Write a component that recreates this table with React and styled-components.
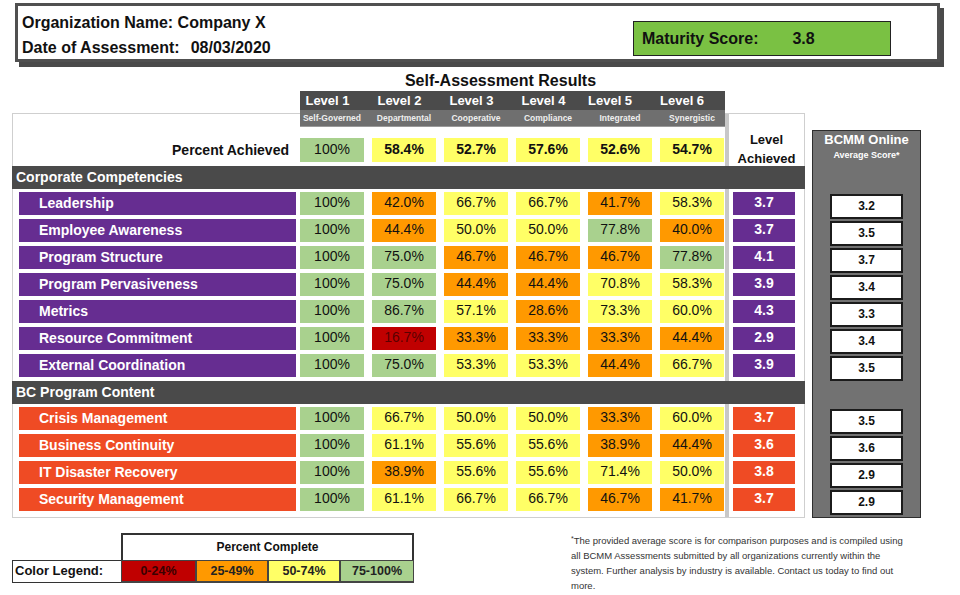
import styled, { createGlobalStyle } from "styled-components"

const GlobalStyle = createGlobalStyle`
    body {
        margin: 0;
        background: #fff;
        font-family: "Liberation Sans", Arial, sans-serif;
        color: #111;
    }
`

const COLORS = {
    red: '#c00000',
    orange: '#ff9900',
    yellow: '#ffff66',
    green: '#a9d18e',
    purple: '#662d91',
    flame: '#ef4b24',
}

const bandColor = v => v < 25 ? COLORS.red : v < 50 ? COLORS.orange : v < 75 ? COLORS.yellow : COLORS.green

const Page = styled.div`
    width: 960px;
    height: 595px;
    overflow: hidden;
`

const HeaderBox = styled.div`
    margin: 3px 0 0 15px;
    width: 925px;
    height: 59px;
    box-sizing: border-box;
    border: 3px solid #505050;
    box-shadow: 4px 5px 0 #4a4a4a;
    display: flex;
    justify-content: space-between;
    align-items: flex-start;
`

const Info = styled.div`
    padding: 4px 0 0 4px;
    font-size: 16px;
    font-weight: 700;
    line-height: 25px;
`

const DateValue = styled.span`
    margin-left: 11px;
`

const MaturityBox = styled.div`
    margin: 15px 46px 0 0;
    width: 258px;
    height: 35px;
    box-sizing: border-box;
    border: 1px solid #222;
    background: #7ac143;
    display: flex;
    align-items: center;
    padding-left: 8px;
    font-size: 16px;
    font-weight: 700;
`

const MaturityValue = styled.span`
    margin-left: 34px;
`

const Main = styled.div`
    display: flex;
    align-items: flex-start;
`

const LeftCol = styled.div`
    margin-left: 12px;
    width: 793px;
`

const Title = styled.div`
    margin-top: 9px;
    padding-left: 184px;
    text-align: center;
    font-size: 16px;
    font-weight: 700;
    line-height: 20px;
`

const TableBox = styled.div`
    margin-top: 22px;
    border: 1px solid #cfcfcf;
`

const TopRow = styled.div`
    display: flex;
    height: 52px;
`

const MainTop = styled.div`
    width: 712px;
    display: flex;
    flex-direction: column;
`

const LevelHeader = styled.div`
    margin: -23px 0 0 287px;
    width: 425px;
`

const LevelNames = styled.div`
    display: flex;
    gap: 8px;
    height: 19px;
    background: #4b4b4b;
`

const LevelName = styled.div`
    width: 64px;
    box-sizing: border-box;
    padding-right: ${p => p.$shift || 9}px;
    text-align: center;
    white-space: nowrap;
    color: #fff;
    font-size: 13px;
    font-weight: 700;
    line-height: 20px;
`

const LevelSubs = styled.div`
    display: flex;
    gap: 8px;
    height: 16px;
    background: #6f6f6f;
    border-bottom: 1px solid #9a9a9a;
`

const LevelSub = styled.div`
    width: 64px;
    text-align: center;
    white-space: nowrap;
    color: #eee;
    font-size: 8.5px;
    font-weight: 700;
    line-height: 16px;
`

const PercentRow = styled.div`
    display: flex;
    margin-top: 11px;
`

const PercentLabel = styled.div`
    width: 287px;
    box-sizing: border-box;
    padding-right: 11px;
    text-align: right;
    font-size: 14px;
    font-weight: 700;
    line-height: 24px;
`

const Cells = styled.div`
    display: flex;
    gap: 8px;
    margin-top: ${p => p.$top || 0}px;
`

const Cell = styled.div`
    width: 64px;
    height: ${p => p.$h || 23}px;
    background: ${p => p.$bg};
    color: ${p => p.$bg === COLORS.red ? '#5a0000' : '#111'};
    text-align: center;
    font-size: 14px;
    font-weight: ${p => p.$bold ? 700 : 400};
    line-height: ${p => (p.$h || 23) - 2}px;
`

const AchievedHead = styled.div`
    width: 79px;
    box-sizing: border-box;
    border-left: 4px solid #c8c8c8;
    padding-top: 16px;
    text-align: center;
    font-size: 13px;
    font-weight: 700;
    line-height: 19px;
`

const SectionBar = styled.div`
    margin: 0 -1px;
    height: 23px;
    background: #4a4a4a;
    color: #fff;
    padding-left: 4px;
    font-size: 14px;
    font-weight: 700;
    line-height: 22px;
`

const DataRow = styled.div`
    display: flex;
    align-items: flex-start;
    height: ${p => 27 + (p.$extra || 0)}px;
`

const RowLabel = styled.div`
    margin: 3px 4px 0 6px;
    width: 277px;
    height: 23px;
    box-sizing: border-box;
    padding-left: 20px;
    background: ${p => p.$bg};
    color: #fff;
    font-size: 14px;
    font-weight: 700;
    line-height: 22px;
`

const AchievedCol = styled.div`
    align-self: stretch;
    margin-left: 1px;
    width: 79px;
    box-sizing: border-box;
    border-left: 4px solid #c8c8c8;
    padding-top: 3px;
`

const AchievedBox = styled.div`
    margin-left: 4px;
    width: 62px;
    height: 23px;
    background: ${p => p.$bg};
    color: #fff;
    text-align: center;
    font-size: 14px;
    font-weight: 700;
    line-height: 21px;
`

const Panel = styled.div`
    margin: 68px 0 0 7px;
    width: 109px;
    box-sizing: border-box;
    border: 1px solid #2e2e2e;
    background: #727272;
    display: flex;
    flex-direction: column;
    align-items: center;
    padding-bottom: 2px;
    color: #fff;
`

const PanelTitle = styled.div`
    font-size: 13px;
    font-weight: 700;
    line-height: 18px;
`

const PanelSub = styled.div`
    font-size: 9px;
    font-weight: 700;
    line-height: 13px;
    margin-bottom: 32px;
`

const ScoreGroup = styled.div`
    display: flex;
    flex-direction: column;
    gap: 2px;
    margin-top: ${p => p.$top || 0}px;
`

const ScoreBox = styled.div`
    width: 73px;
    height: 25px;
    box-sizing: border-box;
    border: 2px solid #1b1b1b;
    background: #fff;
    color: #111;
    text-align: center;
    font-size: 12px;
    font-weight: 700;
    line-height: 21px;
`

const Bottom = styled.div`
    display: flex;
    align-items: flex-start;
    margin-top: 15px;
`

const Legend = styled.div`
    margin-left: 12px;
    display: grid;
    grid-template-columns: 109px 75px 72px 72px 74px;
    grid-template-rows: 27px 23px;
`

const LegendHead = styled.div`
    grid-column: 2 / 6;
    border: 2px solid #333;
    border-bottom: 0;
    text-align: center;
    font-size: 12px;
    font-weight: 700;
    line-height: 24px;
`

const LegendLabel = styled.div`
    border: 1px solid #333;
    border-right: 0;
    padding-left: 2px;
    font-size: 13px;
    font-weight: 700;
    line-height: 20px;
`

const Swatch = styled.div`
    background: ${p => p.$bg};
    border: 1px solid #444;
    border-bottom-width: 2px;
    color: ${p => p.$bg === COLORS.red ? '#3a0000' : '#222'};
    text-align: center;
    font-size: 12.5px;
    font-weight: 700;
    line-height: 21px;
`

const Footnote = styled.p`
    margin: 0 0 0 157px;
    width: 360px;
    color: #333;
    font-size: 9.5px;
    line-height: 15px;
`

const Star = styled.sup`
    font-size: 7px;
    vertical-align: 3px;
    line-height: 0;
`

const levels = [
    ['Level 1', 'Self-Governed', 9],
    ['Level 2', 'Departmental', 9],
    ['Level 3', 'Cooperative', 9],
    ['Level 4', 'Compliance', 9],
    ['Level 5', 'Integrated', 20],
    ['Level 6', 'Synergistic', 20],
]

const percents = [100, 58.4, 52.7, 57.6, 52.6, 54.7]

const sections = [
    {
        name: 'Corporate Competencies',
        color: COLORS.purple,
        extra: 3,
        rows: [
            ['Leadership', [42.0, 66.7, 66.7, 41.7, 58.3], '3.7', '3.2'],
            ['Employee Awareness', [44.4, 50.0, 50.0, 77.8, 40.0], '3.7', '3.5'],
            ['Program Structure', [75.0, 46.7, 46.7, 46.7, 77.8], '4.1', '3.7'],
            ['Program Pervasiveness', [75.0, 44.4, 44.4, 70.8, 58.3], '3.9', '3.4'],
            ['Metrics', [86.7, 57.1, 28.6, 73.3, 60.0], '4.3', '3.3'],
            ['Resource Commitment', [16.7, 33.3, 33.3, 33.3, 44.4], '2.9', '3.4'],
            ['External Coordination', [75.0, 53.3, 53.3, 44.4, 66.7], '3.9', '3.5'],
        ],
    },
    {
        name: 'BC Program Content',
        color: COLORS.flame,
        extra: 5,
        rows: [
            ['Crisis Management', [66.7, 50.0, 50.0, 33.3, 60.0], '3.7', '3.5'],
            ['Business Continuity', [61.1, 55.6, 55.6, 38.9, 44.4], '3.6', '3.6'],
            ['IT Disaster Recovery', [38.9, 55.6, 55.6, 71.4, 50.0], '3.8', '2.9'],
            ['Security Management', [61.1, 66.7, 66.7, 46.7, 41.7], '3.7', '2.9'],
        ],
    },
]

const pct = v => v === 100 ? '100%' : v.toFixed(1) + '%'

const App = () => {
    return <Page>
        <GlobalStyle />
        <HeaderBox>
            <Info>
                <div>Organization Name: Company X</div>
                <div>Date of Assessment:<DateValue>08/03/2020</DateValue></div>
            </Info>
            <MaturityBox>
                Maturity Score:<MaturityValue>3.8</MaturityValue>
            </MaturityBox>
        </HeaderBox>

        <Main>
            <LeftCol>
                <Title>Self-Assessment Results</Title>
                <TableBox>
                    <TopRow>
                        <MainTop>
                            <LevelHeader>
                                <LevelNames>
                                    {levels.map(l => <LevelName key={l[0]} $shift={l[2]}>{l[0]}</LevelName>)}
                                </LevelNames>
                                <LevelSubs>
                                    {levels.map(l => <LevelSub key={l[1]}>{l[1]}</LevelSub>)}
                                </LevelSubs>
                            </LevelHeader>
                            <PercentRow>
                                <PercentLabel>Percent Achieved</PercentLabel>
                                <Cells>
                                    {percents.map((v, i) => <Cell key={i} $h={24} $bg={bandColor(v)} $bold={i > 0}>{pct(v)}</Cell>)}
                                </Cells>
                            </PercentRow>
                        </MainTop>
                        <AchievedHead>Level<br />Achieved</AchievedHead>
                    </TopRow>

                    {sections.map(s => <div key={s.name}>
                        <SectionBar>{s.name}</SectionBar>
                        {s.rows.map((r, idx) => <DataRow key={r[0]} $extra={idx === s.rows.length - 1 ? s.extra : 0}>
                            <RowLabel $bg={s.color}>{r[0]}</RowLabel>
                            <Cells $top={3}>
                                <Cell $bg={COLORS.green}>100%</Cell>
                                {r[1].map((v, i) => <Cell key={i} $bg={bandColor(v)}>{pct(v)}</Cell>)}
                            </Cells>
                            <AchievedCol>
                                <AchievedBox $bg={s.color}>{r[2]}</AchievedBox>
                            </AchievedCol>
                        </DataRow>)}
                    </div>)}
                </TableBox>
            </LeftCol>

            <Panel>
                <PanelTitle>BCMM Online</PanelTitle>
                <PanelSub>Average Score*</PanelSub>
                {sections.map((s, i) => <ScoreGroup key={s.name} $top={i ? 28 : 0}>
                    {s.rows.map(r => <ScoreBox key={r[0]}>{r[3]}</ScoreBox>)}
                </ScoreGroup>)}
            </Panel>
        </Main>

        <Bottom>
            <Legend>
                <LegendHead>Percent Complete</LegendHead>
                <LegendLabel>Color Legend:</LegendLabel>
                <Swatch $bg={COLORS.red}>0-24%</Swatch>
                <Swatch $bg={COLORS.orange}>25-49%</Swatch>
                <Swatch $bg={COLORS.yellow}>50-74%</Swatch>
                <Swatch $bg={COLORS.green}>75-100%</Swatch>
            </Legend>
            <Footnote>
                <Star>*</Star>The provided average score is for comparison purposes and is compiled using<br />
                all BCMM Assessments submitted by all organizations currently within the<br />
                system. Further analysis by industry is available. Contact us today to find out<br />
                more.
            </Footnote>
        </Bottom>
    </Page>
}

export default App
